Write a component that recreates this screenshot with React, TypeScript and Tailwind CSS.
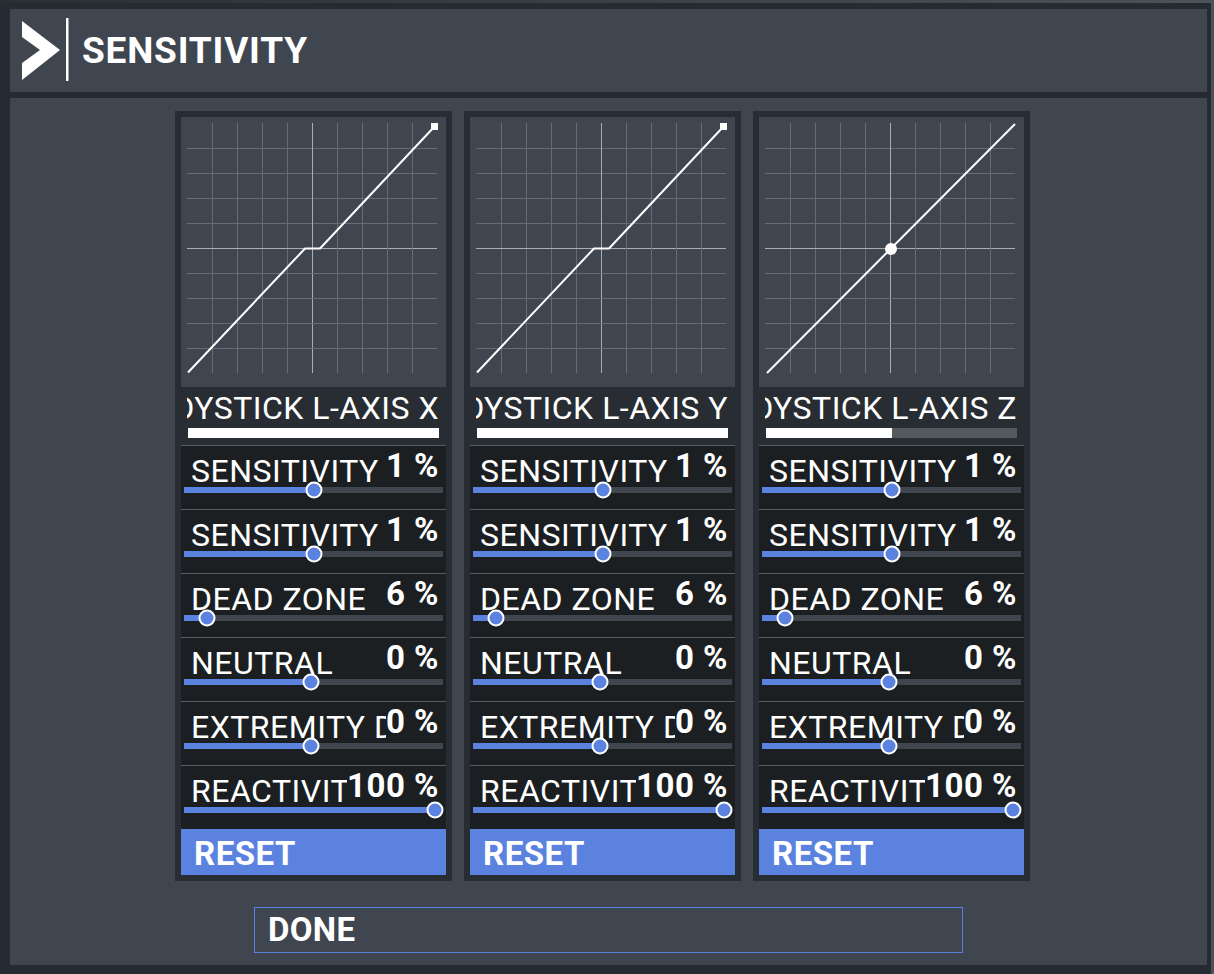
import React from "react";

const BLUE = "#5b82df";

type Row = { label: string; value: string; p: number };

const rows: Row[] = [
  { label: "SENSITIVITY", value: "1 %", p: 0.5 },
  { label: "SENSITIVITY", value: "1 %", p: 0.5 },
  { label: "DEAD ZONE", value: "6 %", p: 0.06 },
  { label: "NEUTRAL", value: "0 %", p: 0.49 },
  { label: "EXTREMITY DEAD ZONE", value: "0 %", p: 0.49 },
  { label: "REACTIVITY", value: "100 %", p: 1 },
];

function Graph({ mode }: { mode: "dz" | "lin" }) {
  const lines = [];
  for (let i = 1; i < 10; i++) {
    const v = 6 + i * 25 + 0.5;
    const c = i === 5 ? "#a9adb1" : "#666c73";
    lines.push(<line key={"v" + i} x1={v} y1={6} x2={v} y2={256} stroke={c} strokeWidth={1} />);
    lines.push(<line key={"h" + i} x1={6} y1={v} x2={256} y2={v} stroke={c} strokeWidth={1} />);
  }
  return (
    <svg width="265" height="270" className="block bg-[#3f4650]">
      {lines}
      {mode === "dz" ? (
        <>
          <polyline
            points="7,255.5 124,131.5 139,131.5 254,9"
            fill="none"
            stroke="#fff"
            strokeWidth={2}
            strokeLinejoin="round"
          />
          <rect x="250" y="6" width="7" height="7" fill="#fff" />
        </>
      ) : (
        <>
          <line x1="8" y1="256" x2="256" y2="7" stroke="#fff" strokeWidth={2} />
          <circle cx="132" cy="132" r="6" fill="#fff" />
        </>
      )}
    </svg>
  );
}

function Card({ axis, mode, bar }: { axis: string; mode: "dz" | "lin"; bar: number }) {
  return (
    <div className="w-[277px] bg-[#282d33] p-[6px] flex flex-col">
      <Graph mode={mode} />
      <div className="h-[41px] ml-[6px] mr-[7px] flex items-center justify-end overflow-hidden whitespace-nowrap text-[32px] tracking-[0.5px] text-white leading-none">
        <span className="shrink-0">{axis}</span>
      </div>
      <div className="h-[10px] ml-[7px] mr-[7px] bg-[#54595e] flex">
        <div className="h-full bg-white" style={{ width: `${bar * 100}%` }} />
      </div>
      <div className="h-[7px]" />
      {rows.map((r, i) => (
        <div key={i} className="h-[64px] border-t border-[#575c61] bg-[#1b1f22] flex flex-col">
          <div className="h-[41px] flex items-start pl-[10px] pr-[7px] text-white">
            <div className="flex-1 min-w-0 overflow-hidden whitespace-nowrap text-[32px] tracking-[0.5px] leading-[36px] mt-[7px]">
              {r.label}
            </div>
            <div className="shrink-0 font-bold text-[33px] tracking-[0.5px] leading-[36px] mt-[2px]">{r.value}</div>
          </div>
          <div className="relative h-[6px] mx-[3px] bg-[#40464d]">
            <div className="absolute left-0 top-0 h-full" style={{ width: `${8 + r.p * 243}px`, background: BLUE }} />
            <div
              className="absolute top-1/2 w-[17px] h-[17px] -translate-x-1/2 -translate-y-1/2 rounded-full border-2 border-white bg-[#5b82df]"
              style={{ left: `${8 + r.p * 243}px` }}
            />
          </div>
        </div>
      ))}
      <div className="h-[46px] bg-[#5b82df] flex items-center pl-[13px] pt-[3px] text-white font-bold text-[33px] tracking-[0.5px]">
        RESET
      </div>
    </div>
  );
}

export default function App() {
  return (
    <div
      className="relative w-[1214px] h-[974px] bg-[#262b31] overflow-hidden"
      style={{ fontFamily: "Roboto, 'Noto Sans', sans-serif" }}
    >
      <div className="h-[3px] bg-gradient-to-r from-[#2a2f34] via-[#3a4045] to-[#4b5358]" />
      <div className="flex">
        <div className="w-[10px] shrink-0" />
        <div className="w-[1197px] flex flex-col pt-[6px]">
          <div className="h-[83px] bg-[#3f4650] flex items-center">
            <svg width="60" height="83" viewBox="0 0 60 83" className="ml-[12px] shrink-0">
              <polygon points="0,12 38,41 0,71 0,54 18,41 0,28" fill="#fff" />
              <rect x="44" y="9" width="2.5" height="63" fill="#fff" />
            </svg>
            <div className="text-white font-bold text-[37px] tracking-[0.8px]">SENSITIVITY</div>
          </div>
          <div className="h-[6px]" />
          <div className="h-[867px] bg-[#3f4650] flex flex-col">
            <div className="flex gap-[12px] pl-[165px] pt-[13px]">
              <Card axis="JOYSTICK L-AXIS X" mode="dz" bar={1} />
              <Card axis="JOYSTICK L-AXIS Y" mode="dz" bar={1} />
              <Card axis="JOYSTICK L-AXIS Z" mode="lin" bar={0.5} />
            </div>
            <div className="mt-[26px] ml-[244px] w-[709px] h-[46px] border border-[#5b82df] flex items-center pl-[13px] text-white font-bold text-[33px] tracking-[0.3px]">
              DONE
            </div>
          </div>
        </div>
        <div className="w-[4px] shrink-0" />
        <div className="w-[3px] shrink-0 h-[974px] bg-[#4b5358]" />
      </div>
    </div>
  );
}
